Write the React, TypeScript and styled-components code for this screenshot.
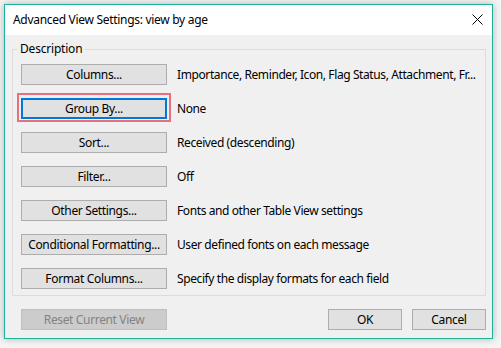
import React from "react";
import styled, { createGlobalStyle } from "styled-components";

const GlobalStyle = createGlobalStyle`
  html, body {
    margin: 0;
    padding: 0;
    background: #f4f4f4;
    font-family: "Noto Sans", "Segoe UI", sans-serif;
    font-size: 12px;
    color: #000;
  }
`;

const Page = styled.div`
  width: 501px;
  height: 348px;
  padding: 4px 0 0 4px;
  box-sizing: border-box;
  overflow: hidden;
`;

const Window = styled.div`
  width: 489px;
  box-sizing: border-box;
  border: 1px solid #1bb39c;
  background: #f0f0f0;
  box-shadow: 0 0 7px rgba(0, 0, 0, 0.28);
  display: flex;
  flex-direction: column;
`;

const TitleBar = styled.div`
  height: 30px;
  background: #ffffff;
  display: flex;
  align-items: center;
  justify-content: space-between;
  padding: 0 9px 0 8px;
`;

const Title = styled.span`
  font-size: 12px;
  letter-spacing: -0.3px;
  margin-top: -1px;
`;

const CloseIcon = styled.svg`
  width: 11px;
  height: 11px;
  margin-top: -1px;
`;

const Body = styled.div`
  padding: 6px 6px 8px 7px;
  display: flex;
  flex-direction: column;
`;

const GroupBox = styled.fieldset`
  margin: 0;
  border: 1px solid #dcdcdc;
  padding: 7px 8px 6px 8px;
  min-width: 0;
  display: flex;
  flex-direction: column;
  gap: 13px;
`;

const Legend = styled.legend`
  padding: 0 3px;
  margin-left: -4px;
  line-height: 16px;
  letter-spacing: -0.2px;
`;

const Row = styled.div`
  display: flex;
  align-items: center;
  gap: 10px;
`;

const Description = styled.span`
  white-space: nowrap;
  letter-spacing: -0.4px;
`;

const Button = styled.button<{ $width?: number; $focused?: boolean }>`
  width: ${(p) => p.$width ?? 146}px;
  height: 21px;
  flex: none;
  box-sizing: border-box;
  margin: 0;
  padding: 0 0 1px;
  font-family: inherit;
  font-size: 12px;
  letter-spacing: -0.35px;
  color: #000;
  background: #e1e1e1;
  border: ${(p) => (p.$focused ? "2px solid #0078d7" : "1px solid #adadad")};
  border-radius: 0;
  outline: none;
  &:disabled {
    background: #cccccc;
    border-color: #bfbfbf;
    color: #838383;
  }
`;

const Highlight = styled.div`
  position: relative;
  flex: none;
  display: flex;
  &::after {
    content: "";
    position: absolute;
    top: -5px;
    bottom: -3px;
    left: -4px;
    right: -4px;
    border: 2px solid #e8707e;
    pointer-events: none;
  }
`;

const Footer = styled.div`
  display: flex;
  align-items: center;
  margin-top: 13px;
  padding-left: 9px;
  gap: 10px;
`;

const Spacer = styled.div`
  flex: 1;
`;

const rows: { label: string; text: string; focused?: boolean }[] = [
  { label: "Columns...", text: "Importance, Reminder, Icon, Flag Status, Attachment, Fr..." },
  { label: "Group By...", text: "None", focused: true },
  { label: "Sort...", text: "Received (descending)" },
  { label: "Filter...", text: "Off" },
  { label: "Other Settings...", text: "Fonts and other Table View settings" },
  { label: "Conditional Formatting...", text: "User defined fonts on each message" },
  { label: "Format Columns...", text: "Specify the display formats for each field" },
];

export default function App() {
  return (
    <>
      <GlobalStyle />
      <Page>
        <Window>
          <TitleBar>
            <Title>Advanced View Settings: view by age</Title>
            <CloseIcon viewBox="0 0 11 11">
              <path d="M0.5 0.5 L10.5 10.5 M10.5 0.5 L0.5 10.5" stroke="#000" strokeWidth="1" />
            </CloseIcon>
          </TitleBar>
          <Body>
            <GroupBox>
              <Legend>Description</Legend>
              {rows.map((r) => (
                <Row key={r.label}>
                  {r.focused ? (
                    <Highlight>
                      <Button $focused>{r.label}</Button>
                    </Highlight>
                  ) : (
                    <Button>{r.label}</Button>
                  )}
                  <Description>{r.text}</Description>
                </Row>
              ))}
            </GroupBox>
            <Footer>
              <Button disabled>Reset Current View</Button>
              <Spacer />
              <Button $width={74}>OK</Button>
              <Button $width={74}>Cancel</Button>
            </Footer>
          </Body>
        </Window>
      </Page>
    </>
  );
}
